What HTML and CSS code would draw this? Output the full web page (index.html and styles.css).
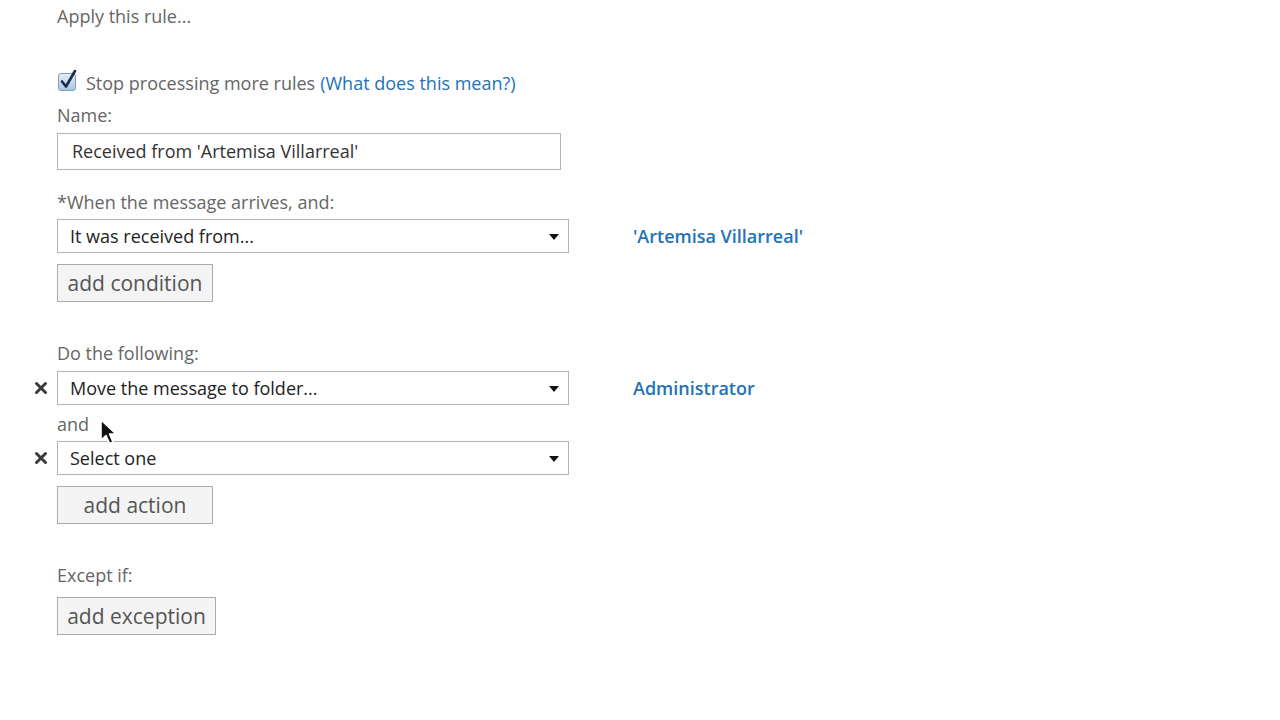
FILE: index.html
```html
<!DOCTYPE html>
<html>
<head>
<meta charset="utf-8">
<link rel="stylesheet" href="styles.css">
</head>
<body>
<div class="page">
  <div class="title">Apply this rule...</div>

  <div class="check-row">
    <svg class="checkbox" width="22" height="24" viewBox="0 0 22 24">
      <defs>
        <linearGradient id="cb" x1="0" y1="0" x2="0" y2="1">
          <stop offset="0" stop-color="#e3eef8"/>
          <stop offset="1" stop-color="#a9c6e2"/>
        </linearGradient>
      </defs>
      <rect x="1.5" y="5.5" width="17" height="17" rx="2.5" fill="url(#cb)" stroke="#7f9fbf"/>
      <path d="M5 13.5 L9 18.5 L18 3" fill="none" stroke="#1a2a4a" stroke-width="2.6" stroke-linecap="round" stroke-linejoin="round"/>
    </svg>
    <span class="check-label">Stop processing more rules</span>
    <span class="link">(What does this mean?)</span>
  </div>

  <div class="label label-name">Name:</div>
  <div class="textbox">Received from 'Artemisa Villarreal'</div>

  <div class="label label-when">*When the message arrives, and:</div>
  <div class="rule-row row-cond">
    <div class="select">
      <span>It was received from...</span>
      <span class="arrow"></span>
    </div>
    <span class="value">'Artemisa Villarreal'</span>
  </div>
  <button class="btn btn-cond">add condition</button>

  <div class="label label-do">Do the following:</div>
  <div class="rule-row removable">
    <svg class="remove" width="14" height="14" viewBox="0 0 14 14"><path d="M2.5 2.5 L11.5 11.5 M11.5 2.5 L2.5 11.5" stroke="#3a3a3a" stroke-width="3" stroke-linecap="round"/></svg>
    <div class="select">
      <span>Move the message to folder...</span>
      <span class="arrow"></span>
    </div>
    <span class="value">Administrator</span>
  </div>
  <div class="label label-and">and</div>
  <div class="rule-row removable row-second">
    <svg class="remove" width="14" height="14" viewBox="0 0 14 14"><path d="M2.5 2.5 L11.5 11.5 M11.5 2.5 L2.5 11.5" stroke="#3a3a3a" stroke-width="3" stroke-linecap="round"/></svg>
    <div class="select">
      <span>Select one</span>
      <span class="arrow"></span>
    </div>
  </div>
  <button class="btn btn-action">add action</button>

  <div class="label label-except">Except if:</div>
  <button class="btn btn-except">add exception</button>

  <svg class="cursor" width="22" height="30" viewBox="0 0 22 30">
    <path d="M2 2 L2 22 L7 17.5 L10.5 25.5 L14 24 L10.5 16 L17 16 Z" fill="#111" stroke="#fff" stroke-width="1.6" stroke-linejoin="round"/>
  </svg>
</div>
</body>
</html>
```

FILE: styles.css
```css
html, body {
  margin: 0;
  padding: 0;
  background: #fefefe;
}

.page {
  position: relative;
  width: 1280px;
  height: 720px;
  padding-left: 57px;
  box-sizing: border-box;
  font-family: "Open Sans", "Noto Sans", sans-serif;
  font-size: 18px;
  color: #666;
  overflow: hidden;
}

.title {
  padding-top: 5px;
  line-height: 22px;
  height: 22px;
}

.check-row {
  margin-top: 44px;
  height: 24px;
  display: flex;
  align-items: center;
  line-height: 22px;
}

.checkbox {
  margin-left: 0;
  margin-right: 7px;
  margin-top: -6px;
}

.check-label {
  margin-right: 5px;
}

.link {
  color: #2472b6;
}

.label {
  line-height: 22px;
  height: 22px;
}

.label-name { margin-top: 9px; }

.textbox {
  margin-top: 7px;
  width: 504px;
  height: 37px;
  box-sizing: border-box;
  border: 1px solid #b3b3b3;
  padding-left: 14px;
  line-height: 35px;
  color: #333;
}

.label-when { margin-top: 21px; }

.rule-row {
  margin-top: 7px;
  display: flex;
  align-items: center;
  height: 34px;
}

.row-cond { margin-top: 6px; }

.select {
  width: 512px;
  height: 34px;
  box-sizing: border-box;
  border: 1px solid #b3b3b3;
  padding: 0 9px 0 12px;
  display: flex;
  align-items: center;
  justify-content: space-between;
  color: #222;
  background: #fff;
}

.arrow {
  width: 0;
  height: 0;
  border-left: 5px solid transparent;
  border-right: 5px solid transparent;
  border-top: 6px solid #111;
  margin-top: 2px;
}

.value {
  margin-left: 64px;
  color: #2472b6;
  font-weight: 600;
}

.removable {
  margin-left: -24px;
}

.remove {
  width: 14px;
  height: 14px;
  margin-left: 1px;
  margin-right: 9px;
}

.btn {
  display: block;
  margin: 11px 0 0 0;
  height: 38px;
  box-sizing: border-box;
  border: 1px solid #ababab;
  background: #f4f4f4;
  font-family: "Open Sans", "Noto Sans", sans-serif;
  font-size: 21px;
  color: #555;
  padding: 0 4px;
  line-height: 34px;
}

.btn-cond { width: 156px; }
.btn-action { width: 156px; }
.btn-except { width: 159px; margin-top: 11px; }

.label-do { margin-top: 40px; }
.label-and { margin-top: 8px; }
.row-second { margin-top: 6px; }
.label-except { margin-top: 40px; }

.cursor {
  position: absolute;
  left: 99px;
  top: 418px;
}
```
